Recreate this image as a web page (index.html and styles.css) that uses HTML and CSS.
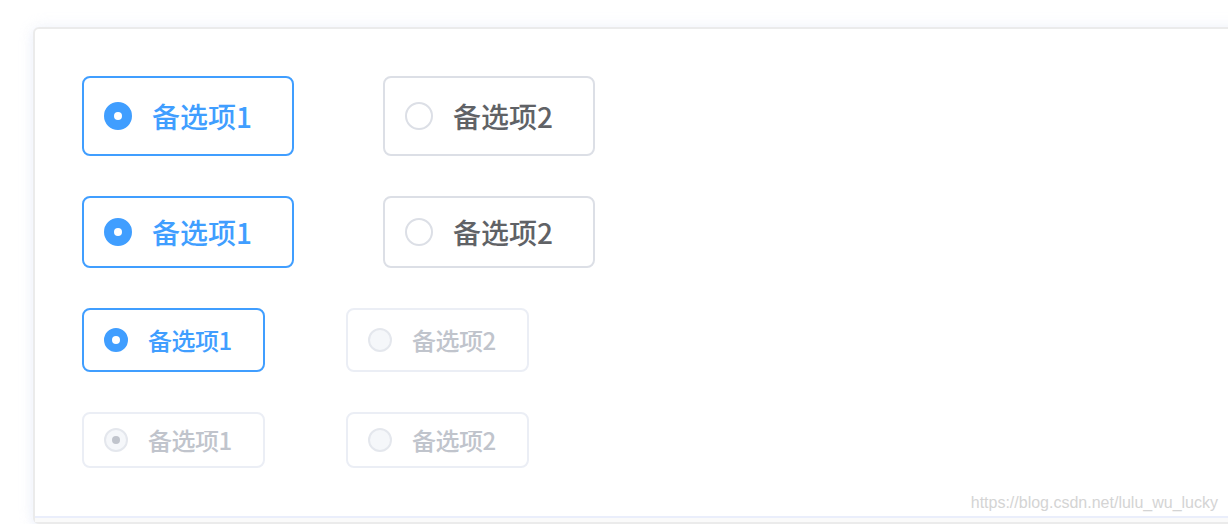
FILE: index.html
```html
<!DOCTYPE html>
<html lang="zh">
<head>
<meta charset="utf-8">
<link rel="stylesheet" href="styles.css">
</head>
<body>
<div class="page">
  <div class="demo-block">
    <div class="source">
      <div class="row row-default">
        <label class="radio checked"><span class="circle"></span><span class="label">备选项1</span></label>
        <label class="radio"><span class="circle"></span><span class="label">备选项2</span></label>
      </div>
      <div class="row row-medium">
        <label class="radio checked"><span class="circle"></span><span class="label">备选项1</span></label>
        <label class="radio"><span class="circle"></span><span class="label">备选项2</span></label>
      </div>
      <div class="row row-small">
        <label class="radio checked"><span class="circle"></span><span class="label">备选项1</span></label>
        <label class="radio disabled"><span class="circle"></span><span class="label">备选项2</span></label>
      </div>
      <div class="row row-mini">
        <label class="radio disabled checked"><span class="circle"></span><span class="label">备选项1</span></label>
        <label class="radio disabled"><span class="circle"></span><span class="label">备选项2</span></label>
      </div>
    </div>
    <div class="meta"></div>
  </div>
  <div class="watermark">https://blog.csdn.net/lulu_wu_lucky</div>
</div>
</body>
</html>
```

FILE: styles.css
```css
html, body {
  margin: 0;
  padding: 0;
  background: #ffffff;
  overflow: hidden;
  width: 1228px;
  height: 524px;
}

.page {
  position: relative;
  width: 1228px;
  height: 524px;
  padding: 27px 0 0 33px;
  box-sizing: border-box;
  overflow: hidden;
  font-family: "Noto Sans CJK SC", "Noto Sans", sans-serif;
}

.demo-block {
  width: 1240px;
  border: 2px solid #ebebeb;
  border-radius: 6px;
  background: #ffffff;
  box-shadow: 0 0 16px 0 rgba(232, 237, 250, 0.6), 0 4px 8px 0 rgba(232, 237, 250, 0.5);
}

.source {
  padding: 47px 47px 48px 47px;
  display: flex;
  flex-direction: column;
  gap: 40px;
}

.meta {
  border-top: 2px solid #eaeefb;
  background: #fafafa;
  height: 4px;
}

.row {
  display: flex;
  align-items: center;
}

.radio {
  display: flex;
  align-items: center;
  box-sizing: border-box;
  border: 2px solid #dcdfe6;
  border-radius: 8px;
  color: #606266;
  white-space: nowrap;
  font-weight: 500;
}

.circle {
  box-sizing: border-box;
  border: 2px solid #dcdfe6;
  border-radius: 50%;
  background: #ffffff;
  display: flex;
  align-items: center;
  justify-content: center;
  flex: none;
}

.circle::after {
  content: "";
  width: 8px;
  height: 8px;
  border-radius: 50%;
  background: #ffffff;
  display: none;
}

.radio.checked {
  border-color: #409eff;
  color: #409eff;
}

.radio.checked .circle {
  border-color: #409eff;
  background: #409eff;
}

.radio.checked .circle::after {
  display: block;
}

.radio.disabled {
  border-color: #ebeef5;
  color: #c0c4cc;
}

.radio.disabled .circle {
  border-color: #e4e7ed;
  background: #f5f7fa;
}

.radio.disabled.checked .circle::after {
  background: #c0c4cc;
}

.row-default .radio, .row-medium .radio {
  width: 212px;
  padding: 0 0 0 20px;
  font-size: 28px;
}

.row-default .radio { height: 80px; }
.row-medium .radio { height: 72px; }

.row-default, .row-medium { gap: 89px; }

.row-default .circle, .row-medium .circle {
  width: 28px;
  height: 28px;
}

.row-small .radio, .row-mini .radio {
  width: 183px;
  padding: 0 0 0 20px;
  font-size: 24px;
}

.row-small .radio { height: 64px; }
.row-mini .radio { height: 56px; }

.row-small, .row-mini { gap: 81px; }

.row-small .circle, .row-mini .circle {
  width: 24px;
  height: 24px;
}

.label {
  padding-left: 20px;
  line-height: 1;
}

.row-small .label, .row-mini .label {
  letter-spacing: -0.5px;
}

.watermark {
  position: absolute;
  right: 10px;
  top: 494px;
  font-family: "Liberation Sans", Arial, sans-serif;
  font-size: 16px;
  color: #d4d4d4;
  text-shadow: 0 0 1px #ffffff;
}
```
